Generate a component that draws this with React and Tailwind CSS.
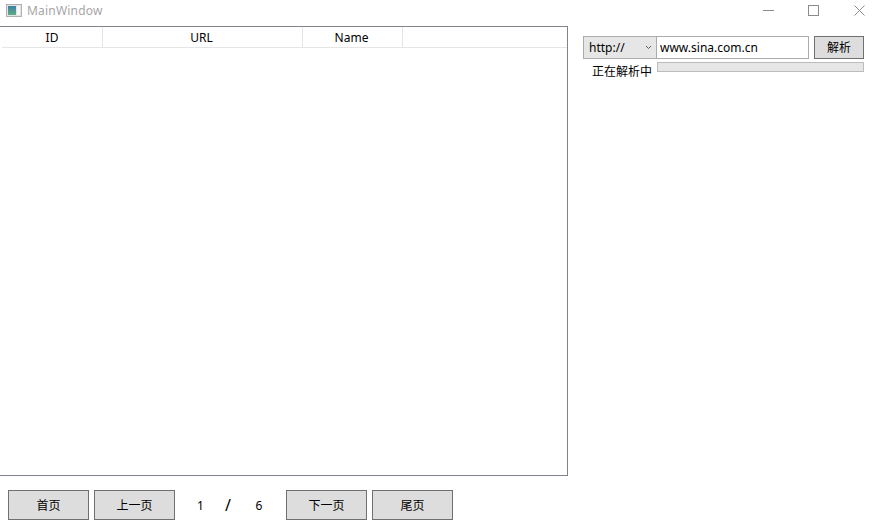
import { useState } from 'react';

const columns = [
  { label: 'ID', width: 'w-[101px]', pad: '' },
  { label: 'URL', width: 'w-[200px]', pad: 'pr-[2px]' },
  { label: 'Name', width: 'w-[100px]', pad: 'pr-[2px]' },
];

function PageButton({ children }) {
  return (
    <button className="w-[81px] h-[30px] pt-[1px] bg-[#dddddd] border border-[#707070] text-[12px] text-black flex items-center justify-center">
      {children}
    </button>
  );
}

function WindowIcon() {
  return (
    <svg width="16" height="16" viewBox="0 0 16 16" className="shrink-0">
      <defs>
        <linearGradient id="appIconFill" x1="0" y1="0" x2="0" y2="1">
          <stop offset="0" stopColor="#3f7fa8" />
          <stop offset="1" stopColor="#5fae84" />
        </linearGradient>
      </defs>
      <rect x="0.5" y="1.5" width="15" height="12" fill="#e4e4e4" stroke="#b0b0b0" />
      <rect x="2" y="3" width="8" height="9" fill="url(#appIconFill)" />
      <rect x="11" y="3" width="3" height="9" fill="#f7f7f7" />
    </svg>
  );
}

export default function App() {
  const [url, setUrl] = useState('www.sina.com.cn');

  return (
    <div className="w-[880px] h-[522px] bg-white overflow-hidden flex flex-col font-['Noto_Sans','Noto_Sans_CJK_SC',sans-serif] text-[12px] text-black">
      {/* title bar */}
      <div className="h-[26px] shrink-0 flex items-center pl-[6px] pb-[4px]">
        <WindowIcon />
        <span className="ml-[5px] text-[12px] tracking-[0.2px] text-[#a6a6a6]">MainWindow</span>
        <div className="ml-auto flex items-center pr-[15px] mb-[1px] text-[#8a8a8a]">
          <svg width="11" height="11" viewBox="0 0 11 11"><path d="M0 5.5h11" stroke="currentColor" /></svg>
          <svg width="11" height="11" viewBox="0 0 11 11" className="ml-[34px]"><rect x="0.5" y="0.5" width="10" height="10" fill="none" stroke="currentColor" /></svg>
          <svg width="11" height="11" viewBox="0 0 11 11" className="ml-[35px]"><path d="M0.5 0.5l10 10M10.5 0.5l-10 10" stroke="currentColor" /></svg>
        </div>
      </div>

      <div className="flex h-[450px] shrink-0">
        {/* list */}
        <div className="w-[568px] shrink-0 border-y border-r border-[#82828c] pl-[2px]">
          <div className="flex h-[21px] border-b border-[#e5e5e5]">
            {columns.map((col) => (
              <div key={col.label} className={`${col.width} ${col.pad} h-[20px] pt-[1px] border-r border-[#e5e5e5] flex items-center justify-center`}>
                {col.label}
              </div>
            ))}
          </div>
        </div>

        {/* parser */}
        <div className="pl-[15px] pt-[10px]">
          <div className="flex items-center">
            <div className="w-[74px] h-[23px] bg-[#e6e6e6] border border-[#acacac] flex items-center justify-between pl-[5px] pr-[4px]">
              <span>http://</span>
              <svg width="7" height="5" viewBox="0 0 7 5"><path d="M1 1l2.5 2.5L6 1" fill="none" stroke="#606060" /></svg>
            </div>
            <input
              value={url}
              onChange={(e) => setUrl(e.target.value)}
              className="w-[152px] h-[23px] border border-[#acacac] border-l-0 pl-[3px] text-[12px] outline-none"
            />
            <button className="ml-[5px] w-[50px] h-[23px] bg-[#dddddd] border border-[#707070] text-[12px] flex items-center justify-center">解析</button>
          </div>
          <div className="flex items-start mt-[3px]">
            <div className="w-[74px] pl-[9px] mt-[2px] leading-[16px]">正在解析中</div>
            <div className="w-[207px] h-[10px] bg-[#e6e6e6] border border-[#bcbcbc]"></div>
          </div>
        </div>
      </div>

      {/* pager */}
      <div className="flex items-center pl-[8px] mt-[14px]">
        <PageButton>首页</PageButton>
        <div className="ml-[5px]"><PageButton>上一页</PageButton></div>
        <span className="ml-[22px] w-[6px] pt-[1px] text-center">1</span>
        <span className="ml-[18px] w-[14px] text-center text-[16px] leading-none">/</span>
        <span className="ml-[20px] w-[8px] pt-[1px] text-center">6</span>
        <div className="ml-[23px]"><PageButton>下一页</PageButton></div>
        <div className="ml-[5px]"><PageButton>尾页</PageButton></div>
      </div>
    </div>
  );
}
